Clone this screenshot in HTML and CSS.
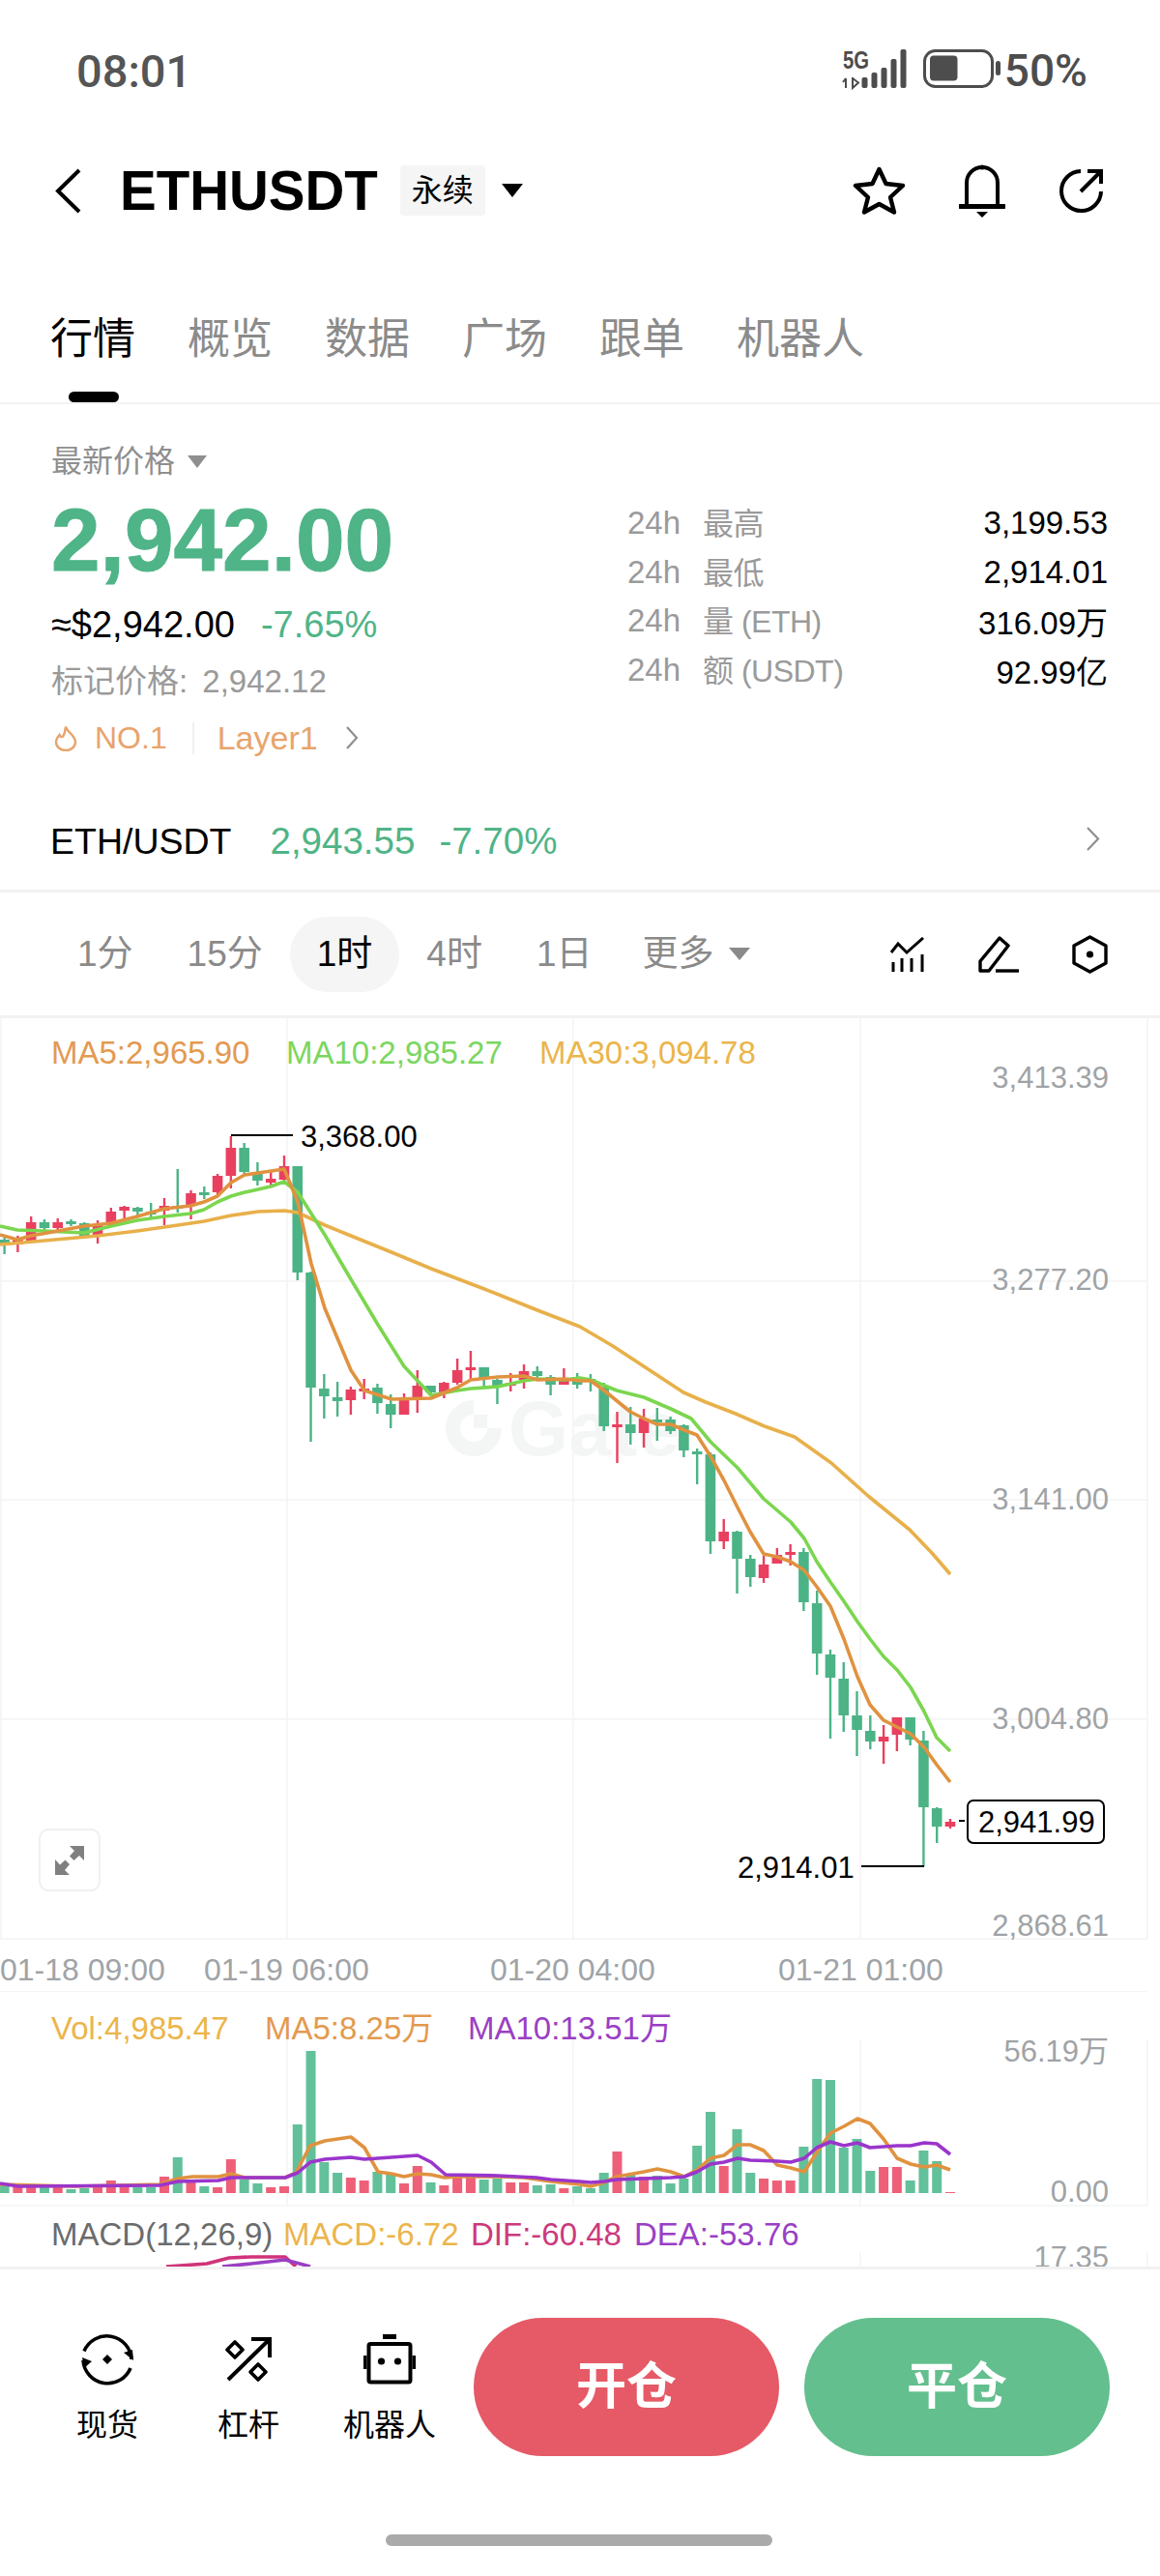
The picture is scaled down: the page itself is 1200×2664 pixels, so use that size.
FILE: index.html
```html
<!DOCTYPE html>
<html lang="zh-CN">
<head>
    <meta charset="UTF-8">
    <meta name="viewport" content="width=device-width, initial-scale=1.0">
    <title>ETHUSDT 永续</title>
    <link rel="stylesheet" href="styles.css">
</head>
<body>
<div class="page">

    <div class="status">
        <span class="clock">08:01</span>
        <div class="status-right">
            <svg class="status-icons" width="175" height="70" viewBox="0 0 175 70">
                <text class="net-text" x="10" y="33" textLength="27" lengthAdjust="spacingAndGlyphs">5G</text>
                <path d="M13 43V53M13 43L10 47M20 42V53L26 47.5L20 43" fill="none" stroke="#4d4d4d" stroke-width="2"/>
                <rect x="29.5" y="42" width="6" height="11" rx="2" fill="#4d4d4d"/>
                <rect x="39.5" y="37" width="6" height="16" rx="2" fill="#4d4d4d"/>
                <rect x="49.5" y="32" width="6" height="21" rx="2" fill="#4d4d4d"/>
                <rect x="59.5" y="23" width="6" height="30" rx="2" fill="#4d4d4d"/>
                <rect x="69.5" y="13" width="6" height="40" rx="2" fill="#4d4d4d"/>
                <rect x="94.5" y="14.5" width="70" height="37" rx="11" fill="none" stroke="#4d4d4d" stroke-width="3"/>
                <rect x="100" y="19.5" width="28.5" height="26" rx="4" fill="#4d4d4d"/>
                <rect x="168" y="25" width="5" height="15" rx="2.5" fill="#4d4d4d"/>
            </svg>
            <span class="battery">50%</span>
        </div>
    </div>

    <div class="nav">
        <svg width="27" height="47" viewBox="0 0 27 47">
            <path d="M25 2L3 23.5L25 45" fill="none" stroke="#000" stroke-width="4"/>
        </svg>
        <span class="symbol">ETHUSDT</span>
        <span class="symbol-tag">永续</span>
        <span class="caret caret-black"></span>
        <div class="nav-icons">
            <svg width="55" height="50" viewBox="0 0 55 50">
                <path d="M27.5 3L34.5 18L52 20L39 32L43 47.5L27.5 39L12 47.5L16 32L3 20L20.5 18Z" fill="none" stroke="#000" stroke-width="4.4" stroke-linejoin="round"/>
            </svg>
            <svg width="48" height="55" viewBox="0 0 48 55">
                <path d="M8 42V19A16 16 0 0 1 40 19V42" fill="none" stroke="#000" stroke-width="4"/>
                <path d="M1 43.5H47" stroke="#000" stroke-width="5" stroke-linecap="round"/>
                <circle cx="24" cy="3" r="2.5"/>
                <path d="M18 49H30L24 55Z"/>
            </svg>
            <svg width="47" height="47" viewBox="0 0 47 47">
                <path d="M23 3A20.5 20.5 0 1 0 44 24" fill="none" stroke="#000" stroke-width="4"/>
                <path d="M23 24L43 4M30 3H44V16" fill="none" stroke="#000" stroke-width="4"/>
            </svg>
        </div>
    </div>

    <div class="tabs">
        <span class="tab tab-active">行情</span>
        <span class="tab">概览</span>
        <span class="tab">数据</span>
        <span class="tab">广场</span>
        <span class="tab">跟单</span>
        <span class="tab">机器人</span>
    </div>

    <div class="quote">
        <div class="quote-left">
            <div class="last-label">最新价格<span class="caret caret-gray"></span></div>
            <div class="last-price">2,942.00</div>
            <div class="last-sub">≈$2,942.00<span class="change">-7.65%</span></div>
            <div class="mark">标记价格: 2,942.12</div>
            <div class="tags">
                <svg width="24" height="27" viewBox="0 0 24 27">
                    <path d="M12 1.5C13 7 22 10 22 17.5A10 8.5 0 0 1 2 17.5C2 14 4 12 5.5 10C6.5 12.5 8.5 12.5 9.5 11C11.5 8.5 11 5 12 1.5Z" fill="none" stroke="#e8a46c" stroke-width="2.4"/>
                </svg>
                <span class="tag-text tag-rank">NO.1</span>
                <span class="tag-sep"></span>
                <span class="tag-text">Layer1</span>
                <svg class="tag-more" width="14" height="24" viewBox="0 0 14 24">
                    <path d="M2 1L12 12L2 23" fill="none" stroke="#8f8f8f" stroke-width="2.2"/>
                </svg>
            </div>
        </div>
        <div class="stats">
            <div class="stat"><span class="stat-period">24h</span><span class="stat-name">最高</span><span class="stat-value">3,199.53</span></div>
            <div class="stat"><span class="stat-period">24h</span><span class="stat-name">最低</span><span class="stat-value">2,914.01</span></div>
            <div class="stat"><span class="stat-period">24h</span><span class="stat-name">量 (ETH)</span><span class="stat-value">316.09万</span></div>
            <div class="stat"><span class="stat-period">24h</span><span class="stat-name">额 (USDT)</span><span class="stat-value">92.99亿</span></div>
        </div>
    </div>

    <div class="pair">
        <span class="pair-name">ETH/USDT</span>
        <span class="pair-price">2,943.55</span>
        <span class="pair-change">-7.70%</span>
        <svg class="pair-more" width="15" height="25" viewBox="0 0 15 25">
            <path d="M2 1L13 12.5L2 24" fill="none" stroke="#8f8f8f" stroke-width="2.2"/>
        </svg>
    </div>

    <div class="intervals">
        <span class="interval">1分</span>
        <span class="interval">15分</span>
        <span class="interval interval-active">1时</span>
        <span class="interval">4时</span>
        <span class="interval">1日</span>
        <span class="interval interval-more">更多</span>
        <span class="caret caret-gray-big"></span>
        <div class="tools">
            <svg width="36" height="36" viewBox="0 0 36 36">
                <path d="M1 16L8 7L17 16L34 1" fill="none" stroke="#000" stroke-width="3"/>
                <path d="M3 26V36M12 22V36M22 22V36M33 18V36" fill="none" stroke="#000" stroke-width="3"/>
            </svg>
            <svg width="42" height="38" viewBox="0 0 42 38">
                <path d="M2 36V26L22 2L31 10L11 36Z" fill="none" stroke="#000" stroke-width="3.4" stroke-linejoin="round"/>
                <path d="M18 36H42" stroke="#000" stroke-width="3.4"/>
            </svg>
            <svg width="37" height="40" viewBox="0 0 37 40">
                <path d="M18.5 2L35 11V29L18.5 38L2 29V11Z" fill="none" stroke="#000" stroke-width="3.4" stroke-linejoin="round"/>
                <circle cx="18.5" cy="20" r="3.6"/>
            </svg>
        </div>
    </div>

    <div class="chart">
        <div class="chart-main">
            <svg class="chart-svg" width="1200" height="1007" viewBox="0 1053 1200 1007">
                <g id="mainGrid" class="grid">
                    <path d="M1 1053V2005M297 1053V2005M593 1053V2005M890 1053V2005M1187 1053V2005"/>
                    <path d="M0 1325H1187M0 1551H1187M0 1778H1187M0 2005H1187M0 2060H1187"/>
                </g>
                <g class="watermark">
                    <path d="M490 1455.500A21.500 21.500 0 1 0 511.500 1477" fill="none" stroke="#f4f5f5" stroke-width="15"/>
                    <rect x="490" y="1463" width="14" height="14" fill="#f4f5f5"/>
                    <text class="watermark-text" x="526" y="1505">Gate</text>
                </g>
                <g id="candles"></g>
                <g id="mainLines"></g>
                <text class="legend leg-ma5" x="53" y="1100">MA5:2,965.90</text>
                <text class="legend leg-ma10" x="296" y="1100">MA10:2,985.27</text>
                <text class="legend leg-ma30" x="558" y="1100">MA30:3,094.78</text>
                <g class="axis-y">
                    <text x="1147" y="1125">3,413.39</text>
                    <text x="1147" y="1334">3,277.20</text>
                    <text x="1147" y="1561">3,141.00</text>
                    <text x="1147" y="1788">3,004.80</text>
                    <text x="1147" y="2002">2,868.61</text>
                </g>
                <g class="axis-x">
                    <text x="0" y="2048">01-18 09:00</text>
                    <text x="211" y="2048">01-19 06:00</text>
                    <text x="507" y="2048">01-20 04:00</text>
                    <text x="805" y="2048">01-21 01:00</text>
                </g>
                <path class="mark-line" d="M239 1174H303"/>
                <text class="mark-text" x="311" y="1186">3,368.00</text>
                <path class="mark-line" d="M891 1930H956"/>
                <text class="mark-text" x="763" y="1942">2,914.01</text>
                <path class="mark-line" d="M992 1883H998"/>
                <rect class="last-box" x="1001" y="1862" width="141" height="44" rx="6"/>
                <text class="mark-text" x="1012" y="1895">2,941.99</text>
            </svg>
            <div class="expand">
                <svg width="30" height="30" viewBox="0 0 30 30">
                    <path d="M15 0H30V15L25 10L19.5 15L15 10.5L20 5Z" fill="#808080"/>
                    <path d="M15 30H0V14L5 19.5L10.5 14.5L15 19L10 25Z" fill="#808080"/>
                </svg>
            </div>
        </div>
        <svg class="chart-svg vol-svg" width="1200" height="222" viewBox="0 2061 1200 222">
            <g class="grid">
                <path d="M297 2110V2282M593 2110V2282M890 2110V2282M1187 2110V2282"/>
                <path d="M0 2282H1187"/>
            </g>
            <g id="volBars"></g>
            <g id="volLines"></g>
            <text class="legend leg-ma30" x="53" y="2110">Vol:4,985.47</text>
            <text class="legend leg-ma5" x="274" y="2110">MA5:8.25万</text>
            <text class="legend leg-purple" x="484" y="2110">MA10:13.51万</text>
            <g class="axis-y">
                <text x="1147" y="2133">56.19万</text>
                <text x="1147" y="2278">0.00</text>
            </g>
        </svg>
        <svg class="chart-svg" width="1200" height="62" viewBox="0 2283 1200 62">
            <g class="grid">
                <path d="M297 2330V2345M890 2330V2345M1187 2330V2345"/>
            </g>
            <path class="ma dif" d="M172 2345L214 2342L237 2336L260 2335L295 2335L306 2345"/>
            <path class="ma dea" d="M230 2345L260 2342L295 2338L321 2345"/>
            <text class="legend leg-gray" x="53" y="2323">MACD(12,26,9)</text>
            <text class="legend leg-ma30" x="293" y="2323">MACD:-6.72</text>
            <text class="legend leg-pink" x="487" y="2323">DIF:-60.48</text>
            <text class="legend leg-purple" x="656" y="2323">DEA:-53.76</text>
            <g class="axis-y">
                <text x="1147" y="2346">17.35</text>
            </g>
        </svg>
    </div>

    <div class="bottom">
        <div class="actions">
            <div class="action">
                <div class="action-icon">
                    <svg width="56" height="54" viewBox="0 0 56 54">
                        <path d="M4 18.5A25.5 25.5 0 0 1 53 27" fill="none" stroke="#000" stroke-width="3.6"/>
                        <path d="M45 20L55 28L54 17Z"/>
                        <path d="M3 28A25.5 25.5 0 0 0 52 36" fill="none" stroke="#000" stroke-width="3.6"/>
                        <path d="M2 25L12 29L4 36Z"/>
                        <path d="M28 22L33 27L28 32L23 27Z"/>
                    </svg>
                </div>
                <span class="action-label">现货</span>
            </div>
            <div class="action">
                <div class="action-icon">
                    <svg width="48" height="48" viewBox="0 0 48 48">
                        <path d="M3 45L46 3M27 3H46V22" fill="none" stroke="#000" stroke-width="4"/>
                        <path d="M10 6L18 14L10 22L2 14Z" fill="none" stroke="#000" stroke-width="3.6" stroke-linejoin="round"/>
                        <path d="M34 29L42 37L34 45L26 37Z" fill="none" stroke="#000" stroke-width="3.6" stroke-linejoin="round"/>
                    </svg>
                </div>
                <span class="action-label">杠杆</span>
            </div>
            <div class="action">
                <div class="action-icon">
                    <svg width="54" height="52" viewBox="0 0 54 52">
                        <rect x="20" y="0" width="14" height="5"/>
                        <rect x="5.5" y="10" width="43" height="39.5" rx="2" fill="none" stroke="#000" stroke-width="4"/>
                        <rect x="0" y="22" width="3.5" height="14"/>
                        <rect x="50.5" y="22" width="3.5" height="14"/>
                        <circle cx="18.5" cy="28" r="3.6"/>
                        <circle cx="35.5" cy="28" r="3.6"/>
                    </svg>
                </div>
                <span class="action-label">机器人</span>
            </div>
            <div class="buttons">
                <div class="btn btn-open">开仓</div>
                <div class="btn btn-close">平仓</div>
            </div>
        </div>
        <div class="home-bar"></div>
    </div>

</div>
<script src="script.js"></script>
</body>
</html>
```
FILE: styles.css
```css
* {
    box-sizing: border-box;
}
body {
    margin: 0;
    background: #fff;
    font-family: "Liberation Sans", "Noto Sans CJK SC", sans-serif;
    color: #000;
}
.page {
    width: 1200px;
    height: 2664px;
    overflow: hidden;
}

/* status bar */
.status {
    height: 146px;
    padding: 0 75px 0 79px;
    display: flex;
    align-items: center;
    justify-content: space-between;
}
.clock {
    font-family: Roboto, sans-serif;
    font-weight: 500;
    font-size: 47px;
    color: #555;
}
.status-right {
    display: flex;
    align-items: center;
    gap: 2px;
}
.net-text {
    font-size: 25px;
    font-weight: 700;
    fill: #4d4d4d;
}
.battery {
    font-family: Roboto, sans-serif;
    font-weight: 500;
    font-size: 46px;
    color: #4d4d4d;
}

/* title row */
.nav {
    height: 102px;
    padding: 0 58px 0 57px;
    display: flex;
    align-items: center;
}
.symbol {
    margin-left: 40px;
    font-size: 56.5px;
    font-weight: 700;
}
.symbol-tag {
    margin-left: 23px;
    width: 88px;
    height: 52px;
    line-height: 52px;
    text-align: center;
    font-size: 32px;
    background: #f5f5f5;
    border-radius: 4px;
}
.caret {
    display: inline-block;
    width: 0;
    height: 0;
    border-style: solid;
    border-color: transparent;
    border-bottom-width: 0;
}
.caret-black {
    margin-left: 17px;
    border-width: 14px 11px 0;
    border-top-color: #000;
}
.caret-gray {
    margin-left: 13px;
    border-width: 13px 10px 0;
    border-top-color: #8f8f8f;
    vertical-align: 4px;
}
.caret-gray-big {
    margin-left: -12px;
    border-width: 13px 11px 0;
    border-top-color: #8a8a8a;
}
.nav-icons {
    margin-left: auto;
    display: flex;
    align-items: center;
    gap: 55px;
}

/* tabs */
.tabs {
    padding-left: 52px;
    display: flex;
    gap: 54px;
    border-bottom: 2px solid #f3f3f3;
    height: 170px;
}
.tab {
    position: relative;
    padding-top: 81px;
    font-size: 44px;
    line-height: 44px;
    color: #8b8b8b;
}
.tab-active {
    color: #000;
}
.tab-active::after {
    content: "";
    position: absolute;
    left: 19px;
    bottom: 0;
    width: 52px;
    height: 11px;
    background: #000;
    border-radius: 6px;
}

/* price block */
.quote {
    height: 402px;
    padding: 0 54px 0 53px;
    display: flex;
    justify-content: space-between;
}
.last-label {
    margin-top: 39px;
    font-size: 32px;
    line-height: 40px;
    color: #8f8f8f;
}
.last-price {
    margin-top: 17px;
    font-size: 91px;
    line-height: 90px;
    font-weight: 700;
    color: #4fb487;
    -webkit-text-stroke: 1px #4fb487;
}
.last-sub {
    margin-top: 20px;
    font-size: 38px;
    line-height: 44px;
}
.change {
    margin-left: 27px;
    color: #4fb487;
}
.mark {
    margin-top: 17px;
    font-size: 33px;
    word-spacing: 6px;
    line-height: 40px;
    color: #9a9a9a;
}
.tags {
    margin-top: 18px;
    height: 40px;
    display: flex;
    align-items: center;
    margin-left: 3px;
}
.tag-text {
    font-size: 34px;
    color: #e8a46c;
}
.tag-rank {
    margin-left: 18px;
    font-size: 32px;
}
.tag-sep {
    width: 2px;
    height: 33px;
    margin: 0 24px 0 26px;
    background: #f0f0f0;
}
.tag-more {
    margin-left: 28px;
}
.stats {
    width: 497px;
    padding-top: 98px;
}
.stat {
    height: 50.6px;
    display: flex;
    align-items: center;
    font-size: 33px;
    color: #9a9a9a;
}
.stat-period {
    width: 78px;
}
.stat-name {
    font-size: 32px;
    letter-spacing: -0.5px;
    position: relative;
    top: -2px;
}
.stat-value {
    margin-left: auto;
    color: #000;
}

/* spot pair row */
.pair {
    height: 103px;
    padding: 0 62px 0 52px;
    display: flex;
    align-items: center;
    font-size: 38.500px;
    border-bottom: 3px solid #f2f2f2;
}
.pair-name {
    font-size: 37.500px;
}
.pair-price {
    margin-left: 40px;
    color: #4fb487;
}
.pair-change {
    margin-left: 25px;
    color: #4fb487;
}
.pair-more {
    margin-left: auto;
    position: relative;
    top: -3px;
}

/* interval row */
.intervals {
    height: 130px;
    padding: 0 54px 0 52px;
    display: flex;
    align-items: center;
    border-bottom: 3px solid #f2f2f2;
}
.interval {
    height: 78px;
    line-height: 78px;
    padding: 0 28px;
    font-size: 37px;
    color: #8a8a8a;
    border-radius: 39px;
}
.interval-active {
    background: #f5f5f5;
    color: #000;
}
.interval-more {
    margin-left: -4px;
}
.tools {
    margin-left: auto;
    display: flex;
    align-items: center;
    gap: 55px;
}

/* chart */
.chart {
    border-bottom: 3px solid #f2f2f2;
}
.chart-main {
    position: relative;
}
.chart-svg {
    display: block;
}
.vol-svg {
    overflow: visible;
}
.grid path {
    fill: none;
    stroke: #f3f4f4;
    stroke-width: 1.5;
}
.watermark-text {
    font-size: 80px;
    font-weight: 700;
    fill: #f4f5f5;
}
.ma {
    fill: none;
    stroke-width: 3.6;
    stroke-linejoin: round;
}
.dif {
    stroke: #d0337a;
}
.dea {
    stroke: #9a3fc4;
}
.legend {
    font-size: 33px;
}
.leg-ma5 {
    fill: #e39a50;
}
.leg-ma10 {
    fill: #7bd65f;
}
.leg-ma30 {
    fill: #ebb54a;
}
.leg-purple {
    fill: #9a3fc4;
}
.leg-gray {
    fill: #6b6b6b;
}
.leg-pink {
    fill: #cc3a7d;
}
.axis-y text {
    font-size: 31px;
    fill: #a0a3a6;
    text-anchor: end;
}
.axis-x text {
    font-size: 32px;
    fill: #a0a3a6;
}
.mark-line {
    fill: none;
    stroke: #000;
    stroke-width: 2;
}
.mark-text {
    font-size: 31px;
    fill: #000;
}
.last-box {
    fill: #fff;
    stroke: #000;
    stroke-width: 2;
}
.expand {
    position: absolute;
    left: 40px;
    top: 838px;
    width: 64px;
    height: 65px;
    display: flex;
    align-items: center;
    justify-content: center;
    background: #fff;
    border: 2px solid #f0f0f0;
    border-radius: 10px;
}

/* bottom bar */
.actions {
    padding: 50px 52px 0 38px;
    display: flex;
}
.action {
    width: 146px;
    padding-top: 16px;
    display: flex;
    flex-direction: column;
    align-items: center;
}
.action-icon {
    height: 54px;
    display: flex;
    align-items: center;
}
.action-label {
    margin-top: 21px;
    font-size: 32px;
    line-height: 40px;
}
.buttons {
    margin-left: 14px;
    display: flex;
    gap: 26px;
}
.btn {
    width: 316px;
    height: 143px;
    line-height: 143px;
    text-align: center;
    border-radius: 72px;
    font-size: 52px;
    font-weight: 700;
    color: #fff;
}
.btn-open {
    background: #e55a66;
}
.btn-close {
    background: #63bf8d;
}
.home-bar {
    width: 400px;
    height: 12px;
    margin: 81px 0 0 399px;
    background: #aaa;
    border-radius: 6px;
}
```
FILE: script.js
```js
// pixel positions read straight off the chart: [wick top, body top, body bottom, wick bottom, isUp]
const candles = [
    [1280, 1282, 1287, 1297, 0], [1278, 1282, 1287, 1295, 1], [1258, 1264, 1283, 1284, 1], [1261, 1264, 1270, 1273, 0],
    [1260, 1264, 1270, 1273, 1], [1261, 1263, 1265, 1268, 0], [1264, 1265, 1278, 1280, 0], [1262, 1266, 1277, 1286, 1],
    [1249, 1253, 1264, 1267, 1], [1247, 1248, 1252, 1260, 1], [1248, 1249, 1253, 1258, 0], [1244, 1253, 1255, 1259, 0],
    [1239, 1247, 1252, 1267, 1], [1209, 1247, 1249, 1254, 0], [1231, 1234, 1246, 1261, 1], [1227, 1233, 1236, 1240, 0],
    [1214, 1216, 1233, 1237, 1], [1175, 1187, 1216, 1229, 1], [1182, 1187, 1212, 1215, 0], [1202, 1213, 1221, 1226, 0],
    [1212, 1219, 1223, 1228, 1], [1195, 1206, 1220, 1223, 1], [1206, 1206, 1316, 1324, 0], [1315, 1316, 1435, 1491, 0],
    [1421, 1436, 1444, 1467, 0], [1429, 1445, 1449, 1465, 0], [1434, 1437, 1448, 1463, 1], [1426, 1436, 1438, 1447, 1],
    [1431, 1435, 1451, 1462, 0], [1442, 1452, 1463, 1477, 0], [1441, 1447, 1463, 1463, 1], [1417, 1433, 1445, 1461, 1],
    [1433, 1433, 1440, 1443, 0], [1429, 1430, 1440, 1446, 1], [1405, 1417, 1430, 1432, 1], [1397, 1414, 1417, 1427, 1],
    [1414, 1414, 1425, 1434, 0], [1426, 1427, 1433, 1452, 0], [1420, 1430, 1432, 1439, 1], [1411, 1418, 1427, 1436, 1],
    [1413, 1418, 1423, 1427, 0], [1422, 1424, 1432, 1443, 0], [1415, 1425, 1432, 1432, 1], [1420, 1424, 1432, 1436, 0],
    [1421, 1426, 1429, 1439, 0], [1430, 1435, 1475, 1480, 0], [1460, 1473, 1475, 1513, 1], [1455, 1473, 1482, 1494, 0],
    [1457, 1467, 1482, 1497, 1], [1456, 1468, 1471, 1490, 0], [1465, 1468, 1480, 1483, 0], [1473, 1474, 1500, 1507, 0],
    [1498, 1501, 1503, 1535, 0], [1502, 1504, 1594, 1607, 0], [1571, 1584, 1594, 1602, 1], [1583, 1584, 1612, 1648, 0],
    [1608, 1612, 1631, 1641, 0], [1609, 1618, 1632, 1637, 1], [1601, 1608, 1617, 1617, 1], [1597, 1605, 1607, 1619, 1],
    [1601, 1605, 1657, 1666, 0], [1645, 1658, 1710, 1732, 0], [1706, 1711, 1735, 1798, 0], [1719, 1736, 1774, 1791, 0],
    [1749, 1774, 1789, 1816, 0], [1774, 1790, 1801, 1809, 0], [1784, 1796, 1801, 1824, 1], [1776, 1776, 1794, 1811, 1],
    [1776, 1776, 1799, 1805, 0], [1790, 1800, 1869, 1930, 0], [1869, 1870, 1889, 1906, 0], [1881, 1884, 1889, 1891, 1]
];

const volumes = [
    10, 6, 7, 6, 6, 4, 5, 7, 13, 8, 6, 6, 17, 37, 13, 7, 6, 35, 14, 10, 6, 7, 71, 147,
    32, 21, 16, 13, 22, 20, 10, 28, 11, 8, 20, 16, 14, 15, 11, 11, 8, 9, 5, 7, 5, 21, 43, 19,
    17, 18, 10, 15, 49, 84, 28, 66, 21, 15, 13, 13, 48, 118, 117, 47, 56, 23, 27, 27, 13, 44, 33, 1
];

const ma5 = '0,1277 18,1282 32,1278 60,1273 87,1268 115,1265 142,1258 170,1250 197,1247 211,1243 225,1237 239,1223 253,1215 267,1213 294,1209 308,1243 322,1307 336,1353 363,1417 377,1438 405,1447 446,1446 473,1435 487,1427 515,1424 542,1423 556,1427 584,1426 600,1428 611,1428 625,1438 652,1460 666,1467 680,1473 694,1473 708,1479 721,1484 735,1506 749,1531 763,1559 776,1584 790,1607 804,1610 818,1615 832,1624 845,1641 859,1661 873,1695 887,1734 900,1763 914,1779 928,1786 942,1793 956,1807 969,1825 983,1843';
const ma10 = '0,1268 18,1272 46,1273 87,1275 115,1268 142,1262 170,1258 197,1255 211,1251 225,1243 239,1237 253,1233 267,1230 280,1227 294,1222 308,1233 336,1277 363,1323 391,1370 418,1413 446,1443 473,1438 487,1436 515,1434 542,1428 556,1426 584,1427 600,1425 611,1427 638,1438 666,1445 694,1457 715,1467 735,1491 763,1518 790,1550 818,1574 832,1591 845,1615 859,1636 873,1656 887,1677 900,1695 914,1713 928,1727 942,1745 956,1770 969,1797 983,1811';
const ma30 = '0,1287 46,1283 101,1278 142,1273 184,1267 211,1263 239,1257 267,1253 294,1252 308,1254 336,1267 363,1278 405,1295 446,1312 501,1333 556,1355 600,1372 634,1392 669,1415 707,1440 730,1450 761,1462 791,1475 822,1486 860,1513 898,1547 941,1582 964,1606 983,1628';
const volMa5 = '0,2260 77,2262 165,2260 184,2254 199,2252 226,2252 239,2249 253,2253 295,2253 306,2248 321,2220 336,2215 363,2211 377,2222 391,2247 405,2249 418,2252 432,2249 446,2250 460,2253 473,2252 515,2252 542,2253 570,2257 600,2260 611,2262 625,2258 638,2252 666,2247 680,2244 694,2247 708,2252 721,2245 735,2233 749,2230 763,2219 776,2219 790,2225 804,2240 818,2243 832,2247 845,2227 859,2207 873,2200 887,2192 900,2197 914,2213 928,2233 942,2239 956,2242 969,2240 983,2245';
const volMa10 = '0,2259 19,2262 165,2261 184,2257 226,2256 239,2253 295,2253 308,2248 321,2237 336,2234 363,2232 377,2234 405,2232 432,2230 446,2237 461,2250 515,2251 555,2253 570,2255 600,2257 611,2258 625,2257 638,2255 666,2254 694,2253 708,2252 721,2247 735,2239 749,2237 763,2233 776,2235 804,2236 818,2237 832,2233 845,2222 859,2216 873,2220 887,2217 900,2222 914,2221 928,2220 942,2220 956,2217 969,2218 983,2229';

const GREEN = '#4cb386';
const RED = '#e9405f';
const STEP = 13.78;
const VOL_BASE = 2269;

function xOf(i) {
    return 4.6 + STEP * i;
}

function polyline(points, color) {
    return `<polyline points="${points}" fill="none" stroke="${color}" stroke-width="3.6" stroke-linejoin="round"/>`;
}

let candleHtml = '';
candles.forEach((c, i) => {
    const x = xOf(i);
    const color = c[4] ? RED : GREEN;
    const bodyHeight = Math.max(c[2] - c[1], 3);
    candleHtml += `<rect x="${x - 1.2}" y="${c[0]}" width="2.4" height="${c[3] - c[0]}" fill="${color}"/>`;
    candleHtml += `<rect x="${x - 5.3}" y="${c[1]}" width="10.6" height="${bodyHeight}" fill="${color}"/>`;
});
document.getElementById('candles').innerHTML = candleHtml;

document.getElementById('mainLines').innerHTML =
    polyline(ma30, '#e8b04a') + polyline(ma10, '#7bd64f') + polyline(ma5, '#e0923f');

let volHtml = '';
volumes.forEach((v, i) => {
    const color = candles[i][4] ? '#ee6078' : '#62c09a';
    volHtml += `<rect x="${xOf(i) - 5}" y="${VOL_BASE - v}" width="10" height="${v}" fill="${color}"/>`;
});
document.getElementById('volBars').innerHTML = volHtml;

document.getElementById('volLines').innerHTML =
    polyline(volMa5, '#e0923f') + polyline(volMa10, '#9a35cc');
```
